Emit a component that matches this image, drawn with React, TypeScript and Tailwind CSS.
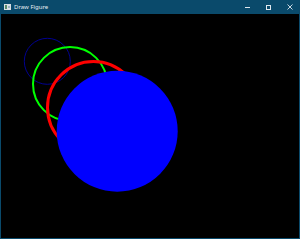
import React from "react";

export default function App() {
  return (
    <div className="w-[300px] h-[239px] bg-[#0a4a6b] flex flex-col overflow-hidden">
      <div className="h-[14px] flex items-center shrink-0">
        <div className="w-[14px] flex items-center justify-center">
          <svg width="7" height="6" viewBox="0 0 7 6">
            <rect x="0" y="0" width="7" height="6" fill="#d8dde2" />
            <rect x="1" y="1" width="2" height="4" fill="#5a8a6a" />
            <rect x="4" y="2" width="2" height="2" fill="#9ab0c0" />
          </svg>
        </div>
        <span
          className="text-[6px] leading-none text-[#e6edf2]"
          style={{ fontFamily: '"Segoe UI", "Noto Sans", "Liberation Sans", sans-serif' }}
        >
          Draw Figure
        </span>
        <div className="ml-auto flex items-center h-full">
          <div className="w-[21px] h-full flex items-center justify-center">
            <div className="w-[5px] h-[1px] bg-[#dfe8ee]" />
          </div>
          <div className="w-[21px] h-full flex items-center justify-center">
            <div className="w-[5px] h-[5px] border border-[#dfe8ee]" />
          </div>
          <div className="w-[21px] h-full flex items-center justify-center">
            <svg width="6" height="6" viewBox="0 0 6 6">
              <path d="M0.5 0.5 L5.5 5.5 M5.5 0.5 L0.5 5.5" stroke="#dfe8ee" strokeWidth="0.9" />
            </svg>
          </div>
        </div>
      </div>
      <div className="flex-1 mx-[1px] mb-[1px] bg-black relative">
        <svg className="absolute inset-0" width="298" height="224" viewBox="0 0 298 224">
          <circle cx="46.3" cy="47.3" r="23" fill="none" stroke="#000090" strokeWidth="1" />
          <circle cx="69" cy="70" r="37" fill="none" stroke="#00ff00" strokeWidth="2" />
          <circle cx="92.5" cy="93.5" r="46" fill="none" stroke="#ff0000" strokeWidth="3" />
          <circle cx="116.2" cy="117.2" r="60.5" fill="#0000ff" />
        </svg>
      </div>
    </div>
  );
}
